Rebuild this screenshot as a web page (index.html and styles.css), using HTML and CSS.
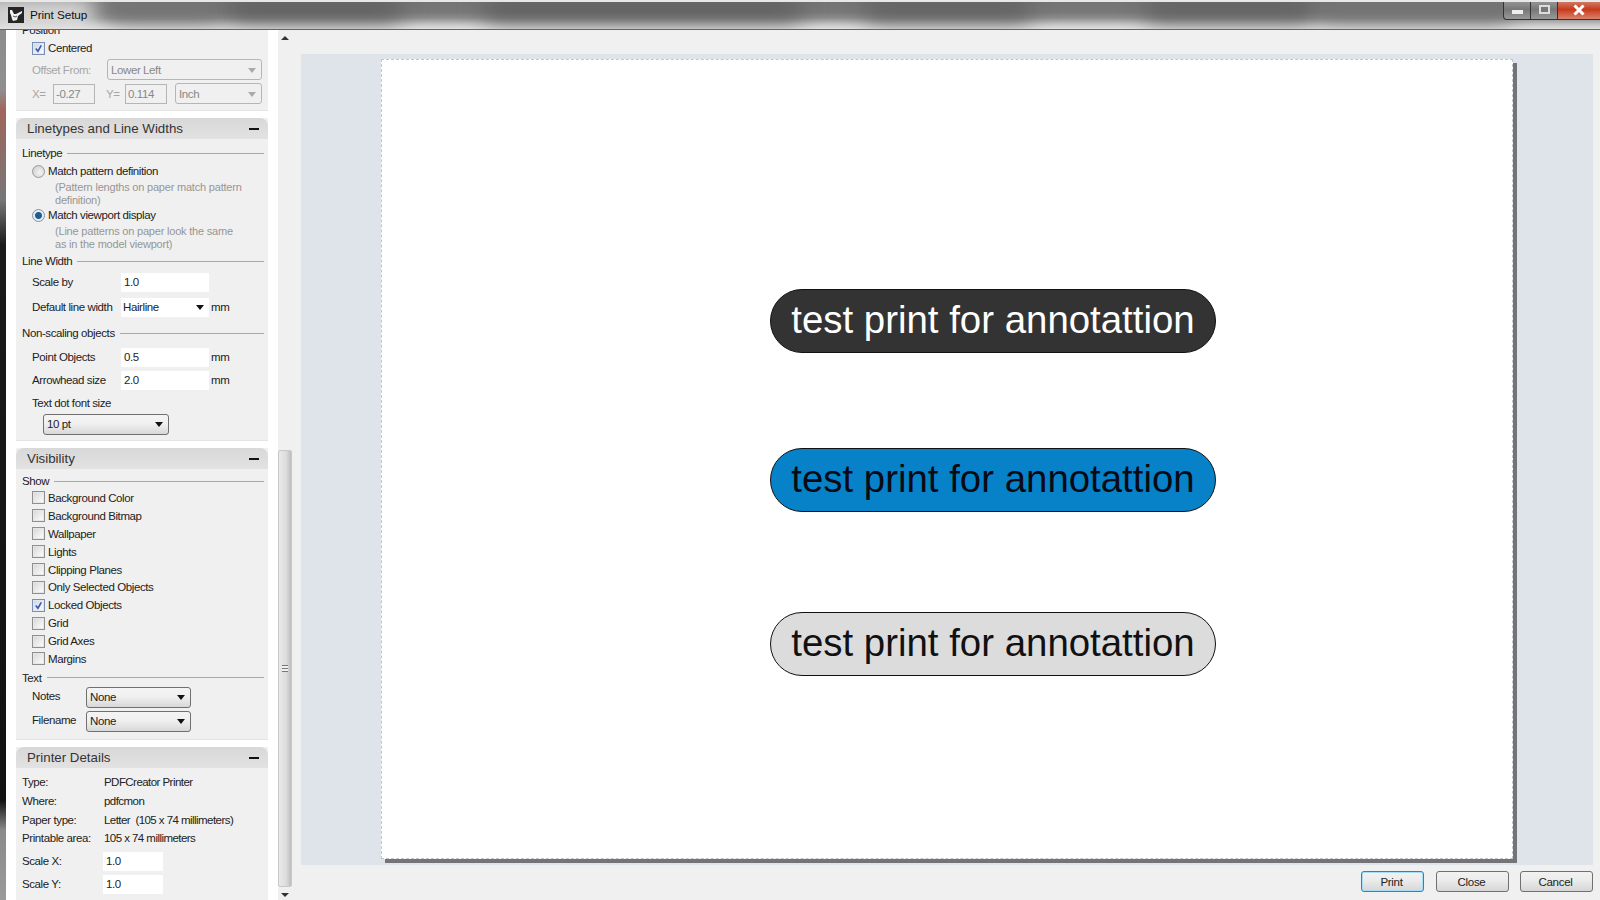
FILE: index.html
```html
<!DOCTYPE html>
<html lang="en">
<head>
<meta charset="utf-8">
<title>Print Setup</title>
<link rel="stylesheet" href="styles.css">
</head>
<body>
<div class="window">
  <div class="edge"></div>
  <div class="frame">
    <header class="titlebar">
      <div class="smudges"><i></i><i></i><i></i><i></i><i></i><i></i><i></i></div>
      <svg class="app-icon" width="16" height="16" viewBox="0 0 16 16"><rect width="16" height="16" fill="#262626"/><path d="M2 3l2 0 2 4 2 0 6-3 0 2-4 3-1 4-4 1-1-2-1-4-1-2z" fill="#f2f2f2"/><path d="M5 9l2 1 2-1" stroke="#555" fill="none"/></svg>
      <span class="title-text">Print Setup</span>
      <div class="caption">
        <div class="cap cap-min"><span class="gl-min"></span></div>
        <div class="cap cap-max"><span class="gl-max"></span></div>
        <div class="cap cap-close"><svg width="14" height="12" viewBox="0 0 14 12"><path d="M2.5 1.5l9 9M11.5 1.5l-9 9" stroke="#fff" stroke-width="3"/></svg></div>
      </div>
    </header>
    <div class="content">
      <aside class="sidebar">
        <div class="panel panel-first">
          <div class="legend clipped"><span>Position</span></div>
          <label class="row check-row centered"><span class="cb on"><svg viewBox="0 0 12 12"><path d="M3 6l2.4 3L9 2.5" fill="none" stroke="#3a57a8" stroke-width="1.7"/></svg></span>Centered</label>
          <div class="row off-row"><span class="lbl dim w-off">Offset From:</span><span class="dd dd-dis w-lower">Lower Left<b class="tri-dim"></b></span></div>
          <div class="row xy-row">
            <span class="lbl dim w-x">X=</span><span class="tb tb-dis w-xi">-0.27</span>
            <span class="lbl dim w-y">Y=</span><span class="tb tb-dis w-yi">0.114</span>
            <span class="dd dd-dis w-inch">Inch<b class="tri-dim"></b></span>
          </div>
        </div>

        <section class="panel panel-lt">
          <h2 class="phead">Linetypes and Line Widths<span class="minus"></span></h2>
          <div class="legend lg-lt"><span>Linetype</span></div>
          <label class="row radio-row r1"><span class="rb"></span>Match pattern definition</label>
          <p class="note n-a">(Pattern lengths on paper match pattern<br>definition)</p>
          <label class="row radio-row r2"><span class="rb on"></span>Match viewport display</label>
          <p class="note n-b">(Line patterns on paper look the same<br>as in the model viewport)</p>
          <div class="legend lg-lw"><span>Line Width</span></div>
          <div class="row f1"><span class="lbl w-f">Scale by</span><span class="tb w-fi">1.0</span></div>
          <div class="row f2"><span class="lbl w-f">Default line width</span><span class="tb w-fi tb-sel">Hairline<b class="tri"></b></span><span class="unit">mm</span></div>
          <div class="legend lg-ns"><span>Non-scaling objects</span></div>
          <div class="row f3"><span class="lbl w-f">Point Objects</span><span class="tb w-fi">0.5</span><span class="unit">mm</span></div>
          <div class="row f4"><span class="lbl w-f">Arrowhead size</span><span class="tb w-fi">2.0</span><span class="unit">mm</span></div>
          <div class="row f5"><span class="lbl">Text dot font size</span></div>
          <div class="row f6"><span class="dd w-pt">10 pt<b class="tri"></b></span></div>
        </section>

        <section class="panel panel-vis">
          <h2 class="phead">Visibility<span class="minus"></span></h2>
          <div class="legend lg-show"><span>Show</span></div>
          <div class="checks">
            <label class="row check-row"><span class="cb"></span>Background Color</label>
            <label class="row check-row"><span class="cb"></span>Background Bitmap</label>
            <label class="row check-row"><span class="cb"></span>Wallpaper</label>
            <label class="row check-row"><span class="cb"></span>Lights</label>
            <label class="row check-row"><span class="cb"></span>Clipping Planes</label>
            <label class="row check-row"><span class="cb"></span>Only Selected Objects</label>
            <label class="row check-row"><span class="cb on"><svg viewBox="0 0 12 12"><path d="M3 6l2.4 3L9 2.5" fill="none" stroke="#3a57a8" stroke-width="1.7"/></svg></span>Locked Objects</label>
            <label class="row check-row"><span class="cb"></span>Grid</label>
            <label class="row check-row"><span class="cb"></span>Grid Axes</label>
            <label class="row check-row"><span class="cb"></span>Margins</label>
          </div>
          <div class="legend lg-text"><span>Text</span></div>
          <div class="row n1"><span class="lbl w-n">Notes</span><span class="dd w-none">None<b class="tri"></b></span></div>
          <div class="row n2"><span class="lbl w-n">Filename</span><span class="dd w-none">None<b class="tri"></b></span></div>
        </section>

        <section class="panel panel-pd">
          <h2 class="phead">Printer Details<span class="minus"></span></h2>
          <div class="row d1"><span class="lbl w-d">Type:</span><span class="val">PDFCreator Printer</span></div>
          <div class="row d2"><span class="lbl w-d">Where:</span><span class="val">pdfcmon</span></div>
          <div class="row d2"><span class="lbl w-d">Paper type:</span><span class="val">Letter&nbsp; (105 x 74 millimeters)</span></div>
          <div class="row d2"><span class="lbl w-d">Printable area:</span><span class="val">105 x 74 millimeters</span></div>
          <div class="row d3"><span class="lbl w-d">Scale X:</span><span class="tb w-s">1.0</span></div>
          <div class="row d4"><span class="lbl w-d">Scale Y:</span><span class="tb w-s">1.0</span></div>
        </section>
      </aside>

      <div class="gutter"></div>

      <div class="scrollbar">
        <span class="arrow-up"></span>
        <div class="thumb"><span class="grip"></span></div>
        <span class="arrow-down"></span>
      </div>

      <main class="main">
        <div class="preview">
          <div class="paper">
            <div class="pill pill-dark">test print for annotattion</div>
            <div class="pill pill-blue">test print for annotattion</div>
            <div class="pill pill-grey">test print for annotattion</div>
          </div>
        </div>
        <footer class="actions">
          <button class="btn btn-default">Print</button>
          <button class="btn btn-close">Close</button>
          <button class="btn btn-cancel">Cancel</button>
        </footer>
      </main>
    </div>
  </div>
</div>
</body>
</html>
```

FILE: styles.css
```css
* { box-sizing: border-box; }
html, body { margin: 0; padding: 0; height: 100%; overflow: hidden; }
body { font-family: "Liberation Sans", Arial, sans-serif; font-size: 11.5px; letter-spacing: -0.4px; color: #222; background: #f0f0f0; }
.window { display: flex; width: 1600px; height: 900px; }
.edge { width: 6px; flex: none; background: linear-gradient(#8a8a8a 0, #8f8f8f 90px, #a0655c 110px, #777 200px, #1a1a1a 245px, #111 800px, #8a8a8a 830px, #9a9a9a 900px); }
.frame { flex: 1; min-width: 0; display: flex; flex-direction: column; }
.titlebar { height: 30px; flex: none; margin-left: -6px; position: relative; display: flex; align-items: center; padding: 0 0 2px 8px; border-top: 2px solid #e8e8e8; border-bottom: 1px solid #666; background: linear-gradient(#747474 0, #787878 10px, #8d8d8d 16px, #c2c2c2 22px, #e2e2e2 27px); overflow: hidden; }
.app-icon { flex: none; position: relative; z-index: 1; }
.title-text { margin-left: 6px; font-size: 11.8px; letter-spacing: -0.1px; color: #111; position: relative; z-index: 1; }
.smudges { position: absolute; inset: 0; }
.smudges i { position: absolute; top: -4px; height: 22px; filter: blur(12px); }
.smudges i:nth-child(1) { left: -20px; width: 115px; height: 32px; background: #e4e4e4; }
.smudges i:nth-child(2) { left: 110px; width: 110px; background: #757575; }
.smudges i:nth-child(3) { left: 230px; width: 170px; background: #5c5c5c; }
.smudges i:nth-child(4) { left: 485px; width: 315px; background: #5c5c5c; }
.smudges i:nth-child(5) { left: 866px; width: 164px; background: #5e5e5e; }
.smudges i:nth-child(6) { left: 1147px; width: 165px; background: #5e5e5e; }
.smudges i:nth-child(7) { left: 1320px; width: 190px; background: #727272; }
.caption { position: absolute; right: 0; top: -2px; height: 20px; display: flex; z-index: 2; }
.cap { height: 20px; display: flex; align-items: center; justify-content: center; border: 1px solid #333; border-top: 0; }
.cap-min { width: 28px; border-radius: 0 0 0 4px; background: linear-gradient(#9a9a9a, #777 50%, #999); align-items: flex-end; padding-bottom: 5px; }
.cap-max { width: 27px; border-left: 0; background: linear-gradient(#9a9a9a, #777 50%, #999); }
.cap-close { width: 42px; border-left: 0; border-right: 0; background: linear-gradient(#cf8a78 0, #c9391c 50%, #d9846d 100%); }
.gl-min { width: 11px; height: 4px; background: #eee; }
.gl-max { width: 11px; height: 9px; border: 2px solid #ddd; background: #777; }
.content { flex: 1; display: flex; min-height: 0; }
.sidebar { width: 263px; flex: none; padding: 0 0 0 10px; background: #fff; overflow: hidden; }
.panel { width: 252px; background: #f0f0f0; border-bottom: 1px solid #e4e4e4; overflow: hidden; margin-bottom: 7px; }
.panel-first { height: 81px; padding-top: 0; }
.panel-lt { height: 323px; }
.panel-vis { height: 292px; }
.panel-pd { height: 160px; margin-bottom: 0; border-bottom: 0; }
.phead { height: 21px; margin: 0; padding: 0 9px 0 11px; display: flex; justify-content: space-between; align-items: center; background: linear-gradient(#d8d8d8, #e2e2e2); border-radius: 8px 8px 0 0; font: 400 13.3px "Liberation Sans", sans-serif; letter-spacing: 0; color: #333; }
.minus { width: 10px; height: 2px; background: #111; }
.row { display: flex; align-items: center; height: 20px; padding-left: 16px; }
.lbl { flex: none; }
.dim { color: #a6a6a6; }
.legend { display: flex; align-items: center; height: 14px; margin: 0 4px 0 6px; gap: 5px; }
.legend::after { content: ""; flex: 1; height: 1px; background: #a8a8a8; }
.clipped { margin-top: -7px; }
.clipped::after { display: none; }
.check-row, .radio-row { height: 18px; gap: 3px; }
.checks .check-row { height: 17.9px; }
.cb { width: 13px; height: 13px; flex: none; border: 1px solid #8e8f8f; background: linear-gradient(135deg, #d6d6d6, #fff); display: block; box-shadow: inset 0 0 0 1px #e6e6e6; }
.cb svg { display: block; width: 11px; height: 11px; }
.cb.on { border-color: #7b8fb5; background: linear-gradient(135deg, #c9d4ea, #fff); }
.rb { width: 13px; height: 13px; flex: none; border-radius: 50%; border: 1px solid #9a9a9a; background: radial-gradient(circle at 60% 60%, #f4f4f4, #c9c9c9); }
.rb.on { background: radial-gradient(circle, #1d5f8c 0 3px, #e6eef4 4px); border-color: #7d95ad; }
.centered { margin-top: 2px; }
.tb { display: flex; align-items: center; height: 19px; background: #fff; padding-left: 3px; position: relative; flex: none; }
.tb-dis { background: #f0f0f0; border: 1px solid #b5b5b5; color: #888; height: 20px; padding-left: 2px; }
.dd { display: flex; align-items: center; position: relative; flex: none; height: 21px; border: 1px solid #707070; border-radius: 3px; padding-left: 3px; background: linear-gradient(#f4f4f4, #f0f0f0 45%, #d8d8d8); color: #222; }
.dd-dis { background: #f0f0f0; border-color: #b5b5b5; color: #888; }
.tri, .tri-dim { position: absolute; right: 5px; top: 50%; margin-top: -2px; width: 0; height: 0; border: 4px solid transparent; border-bottom: 0; border-top: 5px solid #111; }
.tri-dim { border-top-color: #aaa; }
.off-row { height: 21px; margin-top: 2px; }
.w-off { width: 75px; }
.w-lower { width: 155px; }
.xy-row { margin-top: 3px; height: 21px; }
.w-x { width: 21px; }
.w-xi { width: 42px; }
.w-y { margin-left: 11px; width: 19px; }
.w-yi { width: 42px; }
.w-inch { width: 87px; margin-left: 8px; }
.lg-lt { margin-top: 7px; }
.r1 { margin-top: 2px; }
.note { margin: 0 0 0 39px; color: #969696; line-height: 13px; font-size: 11px; letter-spacing: -0.2px; }
.n-a { margin-top: 1px; }
.r2 { margin-top: -1px; }
.n-b { margin-top: 1px; margin-bottom: 1px; }
.lg-lw { margin-top: 3px; }
.w-f { width: 89px; }
.w-fi { width: 88px; }
.tb-sel { padding-left: 2px; }
.unit { margin-left: 2px; }
.f1 { margin-top: 4px; }
.f2 { margin-top: 5px; }
.lg-ns { margin-top: 9px; }
.f3 { margin-top: 7px; }
.f4 { margin-top: 3px; }
.f5 { margin-top: 5px; height: 16px; }
.f6 { margin-top: 3px; padding-left: 27px; }
.w-pt { width: 126px; }
.lg-show { margin-top: 5px; }
.checks { margin-top: 1px; }
.lg-text { margin-top: 3px; }
.n1 { margin-top: 2px; height: 21px; }
.n2 { margin-top: 3px; height: 21px; }
.n1 .lbl, .n2 .lbl { margin-top: -2px; }
.w-n { width: 54px; }
.w-none { width: 105px; }
.panel-pd .row { padding-left: 6px; }
.w-d { width: 82px; }
.val { letter-spacing: -0.55px; }
.d1 { margin-top: 5px; height: 18.5px; }
.d2 { height: 18.7px; }
.d3 { margin-top: 4px; height: 19px; }
.d4 { margin-top: 4px; height: 19px; }
.w-s { width: 60px; margin-left: -1px; }
.gutter { width: 9px; flex: none; background: #fff; }
.scrollbar { width: 14px; flex: none; display: flex; flex-direction: column; align-items: center; background: #f0f0f0; position: relative; }
.arrow-up { margin-top: 6px; border: 4px solid transparent; border-top: 0; border-bottom: 4px solid #333; }
.thumb { width: 14px; height: 437px; margin-top: 410px; background: linear-gradient(90deg, #e9e9e9, #dcdcdc 60%, #bdbdbd); border: 1px solid #c8c8c8; border-radius: 2px; display: flex; align-items: center; justify-content: center; }
.grip { width: 6px; height: 7px; border-top: 1px solid #777; border-bottom: 1px solid #777; background: linear-gradient(#f0f0f0 0 2px, #777 2px 3px, #f0f0f0 3px); }
.arrow-down { margin-top: 6px; border: 4px solid transparent; border-bottom: 0; border-top: 4px solid #333; }
.main { flex: 1; min-width: 0; display: flex; flex-direction: column; padding-left: 9px; background: #f0f0f0; }
.preview { height: 811px; margin-top: 24px; margin-right: 7px; background: #dfe3ea; padding: 5px 0 0 80px; }
.paper { width: 1132px; height: 800px; background: #fff; border: 1px dashed #c4c4cc; box-shadow: 4px 4px 0 #737378; padding: 229px 0 0 388px; }
.pill { width: 446px; height: 64px; border-radius: 32px; border: 1px solid #111; display: flex; align-items: center; justify-content: center; padding-bottom: 2px; font-size: 38.4px; letter-spacing: 0; }
.pill-dark { background: #333; color: #fff; }
.pill-blue { background: #0782c8; color: #0a0a14; margin-top: 95px; }
.pill-grey { background: #dcdcdc; color: #111; margin-top: 100px; }
.actions { flex: 1; display: flex; align-items: flex-start; padding-top: 6px; padding-left: 1060px; }
.btn { height: 21px; font: 11.5px "Liberation Sans", sans-serif; letter-spacing: -0.3px; color: #222; border: 1px solid #707070; border-radius: 3px; background: linear-gradient(#f2f2f2, #ebebeb 45%, #d6d6d6); padding: 0 2px 0 0; }
.btn-default { width: 63px; border-color: #3c7fb1; box-shadow: inset 0 0 0 1px #a8def5; }
.btn-close { width: 73px; margin-left: 12px; }
.btn-cancel { width: 73px; margin-left: 11px; }
```
